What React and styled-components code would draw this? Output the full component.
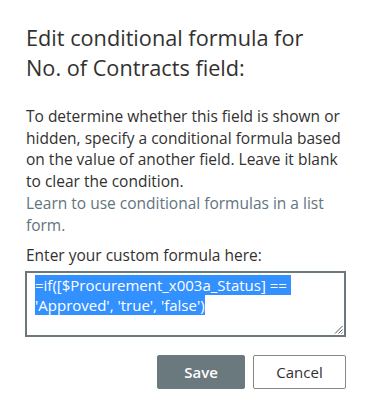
import React from "react";
import styled, { createGlobalStyle } from "styled-components";

const GlobalStyle = createGlobalStyle`
	body {
		margin: 0;
		background: #ffffff;
		font-family: "Segoe UI", "Open Sans", "Noto Sans", sans-serif;
		color: #323130;
	}
`;

const App = () => {
	return (
		<>
			<GlobalStyle />
			<Panel>
				<Title>Edit conditional formula for No. of Contracts field:</Title>
				<Description>
					To determine whether this field is shown or hidden, specify a
					conditional formula based on the value of another field. Leave it
					blank to clear the condition.
					<br />
					<Link href="#">Learn to use conditional formulas in a list form.</Link>
				</Description>
				<Label>Enter your custom formula here:</Label>
				<FormulaBox>
					<Selected>
						{"=if([$Procurement_x003a_Status] == \n'Approved', 'true', 'false')"}
					</Selected>
					<Grip width="9" height="9" viewBox="0 0 9 9">
						<path d="M8.5 1 L1 8.5 M8.5 4.5 L4.5 8.5 M8.5 7.5 L7.5 8.5" stroke="#555" strokeWidth="1" />
					</Grip>
				</FormulaBox>
				<Actions>
					<Button primary>Save</Button>
					<Button>Cancel</Button>
				</Actions>
			</Panel>
		</>
	);
};

const Panel = styled.div`
	width: 371px;
	height: 415px;
	box-sizing: border-box;
	padding: 23px 25px 0;
	display: flex;
	flex-direction: column;
`;

const Title = styled.h2`
	margin: 0;
	font-size: 21.7px;
	line-height: 30px;
	font-weight: 400;
	color: #323130;
	padding-left: 1px;
	padding-right: 30px;
`;

const Description = styled.p`
	margin: 23px 0 0;
	padding-left: 1px;
	font-size: 15.5px;
	line-height: 21.7px;
	color: #323130;
`;

const Link = styled.a`
	color: #5f7580;
	text-decoration: none;
`;

const Label = styled.div`
	margin-top: 8px;
	padding-left: 1px;
	font-size: 15.5px;
	line-height: 22px;
`;

const FormulaBox = styled.div`
	position: relative;
	margin-top: 5px;
	height: 66px;
	box-sizing: border-box;
	border: 2px solid #69797e;
	padding: 3px 8px;
	font-size: 15px;
	line-height: 19.5px;
	white-space: pre-wrap;
`;

const Selected = styled.span`
	background: #3390ff;
	color: #ffffff;
`;

const Grip = styled.svg`
	position: absolute;
	right: 1px;
	bottom: 1px;
`;

const Actions = styled.div`
	display: flex;
	justify-content: flex-end;
	gap: 8px;
	margin-top: 18px;
`;

const Button = styled.button`
	height: 34px;
	width: ${({ primary }) => (primary ? "88px" : "93px")};
	box-sizing: border-box;
	border-radius: 2px;
	border: 1px solid ${({ primary }) => (primary ? "#69797e" : "#8a8886")};
	background: ${({ primary }) => (primary ? "#69797e" : "#ffffff")};
	color: ${({ primary }) => (primary ? "#ffffff" : "#323130")};
	font-family: inherit;
	font-size: 15px;
	font-weight: ${({ primary }) => (primary ? 600 : 400)};
	padding: 0;
	cursor: pointer;
`;

export default App;
